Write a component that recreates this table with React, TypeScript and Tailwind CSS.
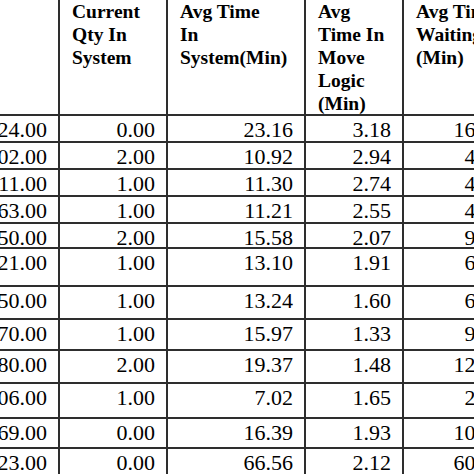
const headers: string[][] = [
  [],
  ['Current', 'Qty In', 'System'],
  ['Avg Time', 'In', 'System(Min)'],
  ['Avg', 'Time In', 'Move', 'Logic', '(Min)'],
  ['Avg Time', 'Waiting', '(Min)'],
]

const widths = ['w-[60px]', 'w-[108px]', 'w-[138px]', 'w-[98px]', 'w-[112px]']

const rows: { h: string; cells: string[] }[] = [
  { h: 'h-[27px]', cells: ['124.00', '0.00', '23.16', '3.18', '16.82'] },
  { h: 'h-[27px]', cells: ['102.00', '2.00', '10.92', '2.94', '4.61'] },
  { h: 'h-[27px]', cells: ['111.00', '1.00', '11.30', '2.74', '4.95'] },
  { h: 'h-[27px]', cells: ['163.00', '1.00', '11.21', '2.55', '4.38'] },
  { h: 'h-[25px]', cells: ['150.00', '2.00', '15.58', '2.07', '9.12'] },
  { h: 'h-[38px]', cells: ['121.00', '1.00', '13.10', '1.91', '6.47'] },
  { h: 'h-[33px]', cells: ['150.00', '1.00', '13.24', '1.60', '6.80'] },
  { h: 'h-[31px]', cells: ['170.00', '1.00', '15.97', '1.33', '9.36'] },
  { h: 'h-[33px]', cells: ['180.00', '2.00', '19.37', '1.48', '12.54'] },
  { h: 'h-[35px]', cells: ['106.00', '1.00', '7.02', '1.65', '2.19'] },
  { h: 'h-[30px]', cells: ['169.00', '0.00', '16.39', '1.93', '10.73'] },
  { h: 'h-[30px]', cells: ['123.00', '0.00', '66.56', '2.12', '60.25'] },
]

export default function App() {
  return (
    <div className="w-[474px] h-[474px] overflow-hidden bg-white text-black font-['Liberation_Serif',serif]">
      <div className="flex flex-col w-[516px]">
        <div className="flex h-[116px] border-b-2 border-[#2e2e2e]">
          {headers.map((lines, i) => (
            <div
              key={i}
              className={`${widths[i]} shrink-0 border-r-2 border-[#2e2e2e] pl-[12px] text-[19.5px] leading-[23px] font-bold`}
            >
              {lines.map((l) => (
                <div key={l} className="whitespace-nowrap">
                  {l}
                </div>
              ))}
            </div>
          ))}
        </div>
        {rows.map((r, ri) => (
          <div key={ri} className={`flex ${r.h} border-b-2 border-[#2e2e2e]`}>
            {r.cells.map((c, ci) => (
              <div
                key={ci}
                className={`${widths[ci]} shrink-0 flex justify-end border-r-2 border-[#2e2e2e] pr-[11px] pt-[2px] text-[22px] leading-[24px]`}
              >
                <span className="whitespace-nowrap">{c}</span>
              </div>
            ))}
          </div>
        ))}
      </div>
    </div>
  )
}
